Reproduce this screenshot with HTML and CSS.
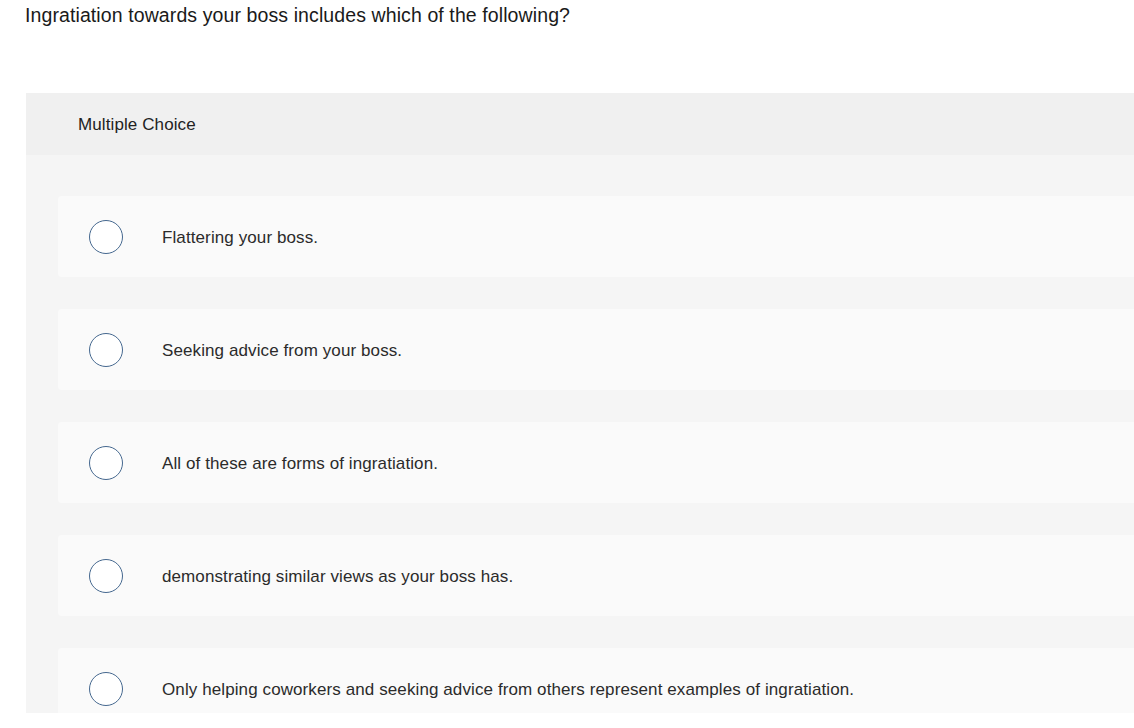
FILE: index.html
```html
<!DOCTYPE html>
<html lang="en">
<head>
    <meta charset="UTF-8">
    <title>Multiple Choice</title>
    <link rel="stylesheet" href="styles.css">
</head>
<body>

    <p class="question">Ingratiation towards your boss includes which of the following?</p>

    <div class="panel">
        <div class="panel-header">Multiple Choice</div>
        <div class="panel-body">
            <label class="option">
                <span class="radio"></span>
                <span class="option-text">Flattering your boss.</span>
            </label>
            <label class="option">
                <span class="radio"></span>
                <span class="option-text">Seeking advice from your boss.</span>
            </label>
            <label class="option">
                <span class="radio"></span>
                <span class="option-text">All of these are forms of ingratiation.</span>
            </label>
            <label class="option">
                <span class="radio"></span>
                <span class="option-text">demonstrating similar views as your boss has.</span>
            </label>
            <label class="option">
                <span class="radio"></span>
                <span class="option-text">Only helping coworkers and seeking advice from others represent examples of ingratiation.</span>
            </label>
        </div>
    </div>

</body>
</html>
```

FILE: styles.css
```css
body {
    margin: 0;
    font-family: "Liberation Sans", Arial, sans-serif;
    color: #333;
    overflow: hidden; /* panel runs past the right edge */
}

.question {
    margin: 0;
    padding: 4px 25px 0;
    height: 26px;
    font-size: 19.5px;
    letter-spacing: 0.1px;
    color: #1a1a1a;
}

.panel {
    margin: 63px 0 0 26px;
    width: 1200px;
}

.panel-header {
    display: flex;
    align-items: center;
    height: 60px;
    padding: 2px 0 0 52px;
    background-color: #f0f0f0;
    font-size: 17px;
    letter-spacing: 0.1px;
    color: #222;
}

.panel-body {
    display: flex;
    flex-direction: column;
    gap: 32px;
    height: 517px;
    padding: 41px 0 0 32px;
    background-color: #f5f5f5;
    overflow: hidden;
}

.option {
    display: flex;
    align-items: center;
    flex-shrink: 0;
    height: 81px;
    padding-left: 31px;
    background-color: #fafafa;
    border-radius: 4px;
    cursor: pointer;
}

.radio {
    flex-shrink: 0;
    width: 32px;
    height: 32px;
    border: 1.5px solid #45688f;
    border-radius: 50%;
    background-color: #fff;
}

.option-text {
    margin-left: 39px;
    padding-top: 2px;
    font-size: 17px;
    letter-spacing: 0.1px;
    color: #2b2b2b;
}
```
